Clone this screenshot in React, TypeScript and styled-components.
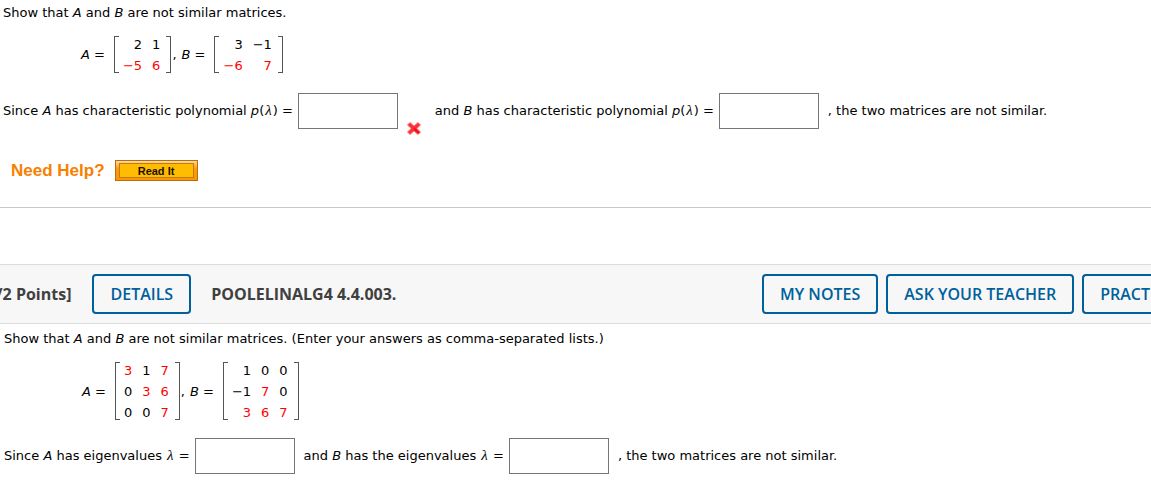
import React from "react";
import styled, { createGlobalStyle } from "styled-components";

const GlobalStyle = createGlobalStyle`
  *, *::before, *::after { box-sizing: border-box; }
  body {
    margin: 0;
    background: #fff;
    color: #000;
    font: 13px/18px Verdana, "DejaVu Sans", sans-serif;
    overflow-x: hidden;
  }
`;

const Question = styled.section<{ $inset: number; $top: number }>`
  padding: ${(p) => p.$top}px 0 0 ${(p) => p.$inset}px;
`;

const Prompt = styled.p`
  margin: 0;
  white-space: nowrap;
`;

const Equation = styled.div`
  display: flex;
  align-items: center;
  margin: 12px 0 0 78px;
  white-space: nowrap;
`;

const Term = styled.span`
  margin-right: 9px;
`;

const Separator = styled.span`
  margin: 0 5px 0 1px;
`;

const MatrixFrame = styled.div`
  position: relative;
  padding: 0 6px 0 4px;

  &::before,
  &::after {
    content: "";
    position: absolute;
    top: 2px;
    bottom: 3px;
    width: 5px;
    border: 1px solid #555;
  }
  &::before {
    left: 0;
    border-right: 0;
  }
  &::after {
    right: 0;
    border-left: 0;
  }
`;

const MatrixTable = styled.table`
  border-collapse: collapse;
`;

const Entry = styled.td<{ $red: boolean }>`
  padding: 0 5px;
  line-height: 21px;
  text-align: right;
  color: ${(p) => (p.$red ? "#f00" : "#000")};
`;

const AnswerRow = styled.div<{ $top: number }>`
  display: flex;
  align-items: center;
  margin-top: ${(p) => p.$top}px;
  white-space: nowrap;
`;

const AnswerLabel = styled.label`
  margin-right: 5px;
`;

const AnswerInput = styled.input`
  width: 100px;
  height: 36px;
  margin: 0 9px 0 0;
  padding: 0 6px;
  border: 1px solid #767676;
  border-radius: 0;
  background: #fff;
  font: inherit;
`;

const Lambda = styled.i`
  margin: 0 1px;
  font-family: "Liberation Serif", serif;
  font-size: 15px;
  line-height: 16px;
`;

const WrongMark = styled.svg`
  flex: none;
  align-self: flex-end;
  width: 14px;
  height: 13px;
  margin: 0 14px -6px 0;
`;

const HelpBar = styled.div`
  display: flex;
  align-items: center;
  margin: 31px 0 0 8px;
`;

const HelpTitle = styled.span`
  margin-right: 10px;
  color: #f78000;
  font: bold 17px/21px "Liberation Sans", Arial, sans-serif;
`;

const ReadButton = styled.button`
  width: 83px;
  height: 21px;
  padding: 3px;
  border: 1px solid #b86f0b;
  background: linear-gradient(#ffd9a0, #ff9a0c 40%, #ff9500);
`;

const ReadLabel = styled.span`
  display: block;
  height: 15px;
  margin-top: -1px;
  border: 1px solid #b97d10;
  background: #ffbc00;
  color: #1a1000;
  font: bold 11px/14px "Liberation Sans", Arial, sans-serif;
`;

const Divider = styled.hr`
  margin: 26px 0 56px;
  border: 0;
  border-top: 1px solid #c8c8c8;
`;

const Header = styled.header`
  display: flex;
  align-items: center;
  padding: 9px 0;
  border: solid #dcdcdc;
  border-width: 1px 0;
  background: #f7f7f7;
  color: #404040;
  font: bold 16px/22px "Open Sans", sans-serif;
  white-space: nowrap;
  overflow: hidden;
`;

const Points = styled.span`
  margin: 0 21px 0 -4px;
`;

const Code = styled.span`
  margin-left: 20px;
`;

const Actions = styled.div`
  display: flex;
  gap: 8px;
  margin: 0 1px 0 auto;
`;

const OutlineButton = styled.button`
  height: 40px;
  padding: 0 16px;
  border: 2px solid #00609c;
  border-radius: 4px;
  background: transparent;
  color: #00609c;
  font: 600 16px/22px "Open Sans", sans-serif;
`;

const EdgeButton = styled(OutlineButton)`
  margin-right: -1px;
  padding-right: 1px;
  border-right: 0;
  border-radius: 4px 0 0 4px;
`;

type Cell = [string, boolean?];

function Matrix({ rows }: { rows: Cell[][] }) {
  return (
    <MatrixFrame>
      <MatrixTable>
        <tbody>
          {rows.map((row, r) => (
            <tr key={r}>
              {row.map(([value, red], c) => (
                <Entry key={c} $red={!!red}>{value}</Entry>
              ))}
            </tr>
          ))}
        </tbody>
      </MatrixTable>
    </MatrixFrame>
  );
}

function MatrixPair({ a, b }: { a: Cell[][]; b: Cell[][] }) {
  return (
    <Equation>
      <Term><i>A</i> =</Term>
      <Matrix rows={a} />
      <Separator>,</Separator>
      <Term><i>B</i> =</Term>
      <Matrix rows={b} />
    </Equation>
  );
}

export default function App() {
  return (
    <>
      <GlobalStyle />
      <Question $inset={3} $top={4}>
        <Prompt>Show that <i>A</i> and <i>B</i> are not similar matrices.</Prompt>
        <MatrixPair
          a={[[["2"], ["1"]], [["−5", true], ["6", true]]]}
          b={[[["3"], ["−1"]], [["−6", true], ["7", true]]]}
        />
        <AnswerRow $top={17}>
          <AnswerLabel htmlFor="poly-a">
            Since <i>A</i> has characteristic polynomial <i>p</i>(<Lambda>λ</Lambda>) =
          </AnswerLabel>
          <AnswerInput id="poly-a" type="text" />
          <WrongMark viewBox="0 0 14 13" role="img" aria-label="Incorrect">
            <path
              d="M3 0.5 L7 4 L11 0.5 L13.5 3 L9.8 6.5 L13.5 10 L11 12.5 L7 9 L3 12.5 L0.5 10 L4.2 6.5 L0.5 3 Z"
              fill="#fb3038"
              stroke="#ff7078"
              strokeWidth="1"
              strokeLinejoin="round"
            />
            <path d="M7 6.5 L12 11" stroke="#f0101c" strokeWidth="2" />
          </WrongMark>
          <AnswerLabel htmlFor="poly-b">
            and <i>B</i> has characteristic polynomial <i>p</i>(<Lambda>λ</Lambda>) =
          </AnswerLabel>
          <AnswerInput id="poly-b" type="text" />
          <span>, the two matrices are not similar.</span>
        </AnswerRow>
        <HelpBar>
          <HelpTitle>Need Help?</HelpTitle>
          <ReadButton type="button"><ReadLabel>Read It</ReadLabel></ReadButton>
        </HelpBar>
      </Question>
      <Divider />
      <Header>
        <Points>/2 Points]</Points>
        <OutlineButton type="button">DETAILS</OutlineButton>
        <Code>POOLELINALG4 4.4.003.</Code>
        <Actions>
          <OutlineButton type="button">MY NOTES</OutlineButton>
          <OutlineButton type="button">ASK YOUR TEACHER</OutlineButton>
          <EdgeButton type="button">PRACT</EdgeButton>
        </Actions>
      </Header>
      <Question $inset={4} $top={6}>
        <Prompt>
          Show that <i>A</i> and <i>B</i> are not similar matrices. (Enter your answers as comma-separated lists.)
        </Prompt>
        <MatrixPair
          a={[
            [["3", true], ["1"], ["7", true]],
            [["0"], ["3", true], ["6", true]],
            [["0"], ["0"], ["7", true]],
          ]}
          b={[
            [["1"], ["0"], ["0"]],
            [["−1"], ["7", true], ["0"]],
            [["3", true], ["6", true], ["7", true]],
          ]}
        />
        <AnswerRow $top={15}>
          <AnswerLabel htmlFor="eig-a">
            Since <i>A</i> has eigenvalues <Lambda>λ</Lambda> =
          </AnswerLabel>
          <AnswerInput id="eig-a" type="text" />
          <AnswerLabel htmlFor="eig-b">
            and <i>B</i> has the eigenvalues <Lambda>λ</Lambda> =
          </AnswerLabel>
          <AnswerInput id="eig-b" type="text" />
          <span>, the two matrices are not similar.</span>
        </AnswerRow>
      </Question>
    </>
  );
}
